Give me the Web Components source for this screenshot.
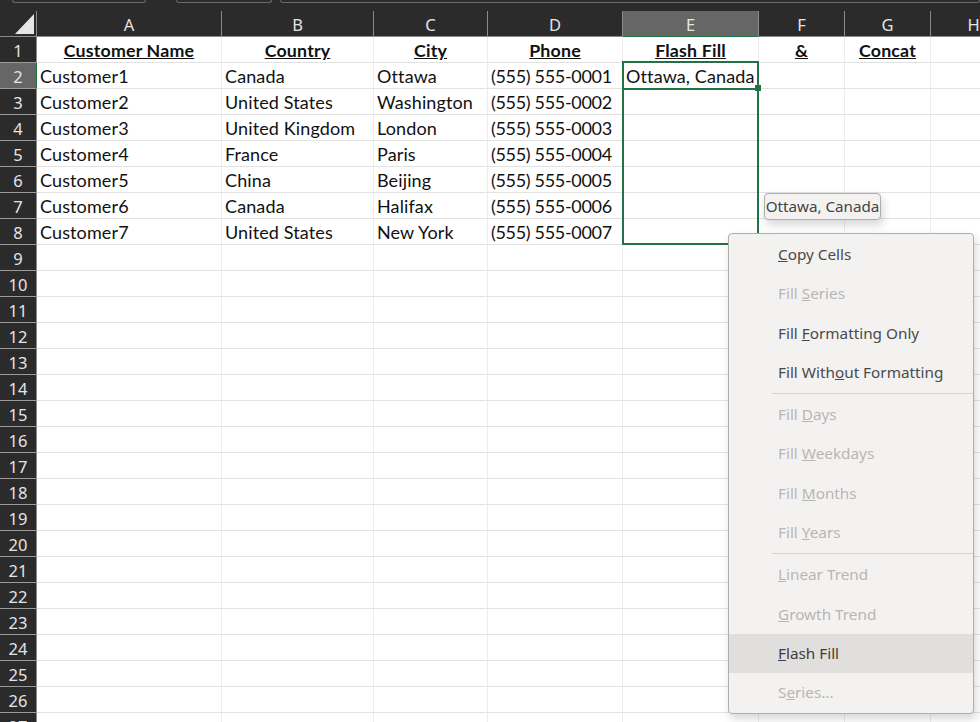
<!DOCTYPE html>
<html><head><meta charset="utf-8"><style>
html,body{margin:0;padding:0;width:980px;height:722px;overflow:hidden;background:#fff}
body{font-family:"Noto Sans","Open Sans",sans-serif}
</style></head><body>
<xl-app></xl-app>
<script>
const COLS=[['A',185],['B',152],['C',114],['D',135],['E',136],['F',86],['G',86],['H',86]];
const DATA=[
['Customer Name','Country','City','Phone','Flash Fill','&','Concat',''],
['Customer1','Canada','Ottawa','(555) 555-0001','Ottawa, Canada','','',''],
['Customer2','United States','Washington','(555) 555-0002','','','',''],
['Customer3','United Kingdom','London','(555) 555-0003','','','',''],
['Customer4','France','Paris','(555) 555-0004','','','',''],
['Customer5','China','Beijing','(555) 555-0005','','','',''],
['Customer6','Canada','Halifax','(555) 555-0006','','','',''],
['Customer7','United States','New York','(555) 555-0007','','','','']];
class XlTopbar extends HTMLElement{constructor(){super();this.attachShadow({mode:'open'}).innerHTML=`<style>
:host{display:flex;height:11px;background:#2b2b2b;gap:30px;padding-left:12px;box-sizing:border-box;overflow:hidden}
i{display:block;height:2px;border:1px solid #6a6a6a;border-top:0;border-radius:0 0 5px 5px;box-sizing:content-box}
</style><i style="width:132px"></i><i style="width:94px"></i><i style="width:700px;margin-left:-22px"></i>`}}
class XlSheet extends HTMLElement{constructor(){super();
const cols=COLS.map(c=>c[1]+'px').join(' ');
let h='<div class="c corner"><svg width="36" height="25" viewBox="0 0 36 25"><path d="M34 3V23H15Z" fill="#e6e6e6"/></svg></div>';
COLS.forEach(([n],i)=>h+=`<div class="c ch${n==='E'?' sel':''}">${n}</div>`);
for(let r=1;r<=27;r++){
 h+=`<div class="c rh${r===2?' sel':''}">${r}</div>`;
 COLS.forEach((_,i)=>{const t=r<=8?DATA[r-1][i]:'';h+=`<div class="c d${r===1?' th':(i===3?' ph':'')}">${t}</div>`});
}
this.attachShadow({mode:'open'}).innerHTML=`<style>
:host{display:grid;grid-template-columns:37px ${cols};grid-template-rows:26px repeat(27,26px);font:17px/25px "Lato",sans-serif;color:#111;position:relative;background:#fff;height:711px;overflow:hidden}
.c{box-sizing:border-box;white-space:nowrap;overflow:visible}
.corner{background:#2b2b2b;border-right:1px solid #8a8a8a;border-bottom:1px solid #8a8a8a;line-height:0}
.ch{background:#2b2b2b;color:#e4e4e4;text-align:center;border-right:1px solid #8a8a8a;border-bottom:1px solid #8a8a8a;font:16.5px/28px "Noto Sans",sans-serif}
.rh{background:#2b2b2b;color:#e4e4e4;text-align:center;border-bottom:1px solid #9a9a9a;font:16.5px/27px "Noto Sans",sans-serif;border-right:1px solid #8a8a8a}
.ch.sel{background:#666;border-bottom:1px solid #1f7244}
.rh.sel{background:#666;border-right:1px solid #1f7244}
.d{border-right:1px solid #ececec;border-bottom:1px solid #e2e2e2;padding-left:3px;font-size:18px;letter-spacing:.12px;line-height:26px}
.ph{letter-spacing:-.32px}
.th{font-weight:700;text-align:center;text-decoration:underline;padding-left:0;font-size:17.8px;letter-spacing:.18px;line-height:26px}
.range{position:absolute;left:622px;top:50px;width:137px;height:184px;box-sizing:border-box;border:2px solid #217346;pointer-events:none}
.active{position:absolute;left:622px;top:50px;width:137px;height:29px;box-sizing:border-box;border-bottom:2px solid #217346}
.handle{position:absolute;left:755px;top:74px;width:6px;height:6px;background:#217346}
</style>${h}<div class="range"></div><div class="active"></div><div class="handle"></div>`}}
class XlTip extends HTMLElement{constructor(){super();this.attachShadow({mode:'open'}).innerHTML=`<style>
:host{position:absolute;left:764px;top:193px;width:117px;height:27px;box-sizing:border-box;background:#f3f2f1;border:1.5px solid #b0aeac;border-radius:4px;font:15.2px/25px "Noto Sans",sans-serif;color:#444;text-align:center;white-space:nowrap;box-shadow:2px 5px 10px rgba(0,0,0,.16)}
</style><slot></slot>`}}
class XlMenu extends HTMLElement{constructor(){super();this.attachShadow({mode:'open'}).innerHTML=`<style>
:host{position:absolute;left:728px;top:233px;width:246px;height:481px;box-sizing:border-box;background:#f3f2f1;border:1.5px solid #b0aeac;border-radius:4px;display:flex;flex-direction:column;padding-top:1px;box-shadow:2px 5px 10px rgba(0,0,0,.16);font:15.3px/39.4px "Noto Sans",sans-serif}
</style><slot></slot>`}}
class XlItem extends HTMLElement{constructor(){super();this.attachShadow({mode:'open'}).innerHTML=`<style>
:host{display:block;height:39.4px;padding-left:49px;color:#4a4a4a;white-space:nowrap}
:host([disabled]){color:#b8b6b4}
:host([active]){background:#e1dfdd;color:#3c3c3c}
</style><slot></slot>`}}
class XlSep extends HTMLElement{constructor(){super();this.attachShadow({mode:'open'}).innerHTML=`<style>
:host{display:block;height:1px;margin:0 0 1.5px 42.5px;background:#d6d4d2}
</style>`}}
class XlApp extends HTMLElement{constructor(){super();this.attachShadow({mode:'open'}).innerHTML=`<style>
:host{display:block;position:relative;width:980px;height:722px;overflow:hidden}
</style>
<xl-topbar></xl-topbar><xl-sheet></xl-sheet>
<xl-tip>Ottawa, Canada</xl-tip>
<xl-menu>
<xl-item><u>C</u>opy Cells</xl-item>
<xl-item disabled>Fill <u>S</u>eries</xl-item>
<xl-item>Fill <u>F</u>ormatting Only</xl-item>
<xl-item>Fill With<u>o</u>ut Formatting</xl-item>
<xl-sep></xl-sep>
<xl-item disabled>Fill <u>D</u>ays</xl-item>
<xl-item disabled>Fill <u>W</u>eekdays</xl-item>
<xl-item disabled>Fill <u>M</u>onths</xl-item>
<xl-item disabled>Fill <u>Y</u>ears</xl-item>
<xl-sep></xl-sep>
<xl-item disabled><u>L</u>inear Trend</xl-item>
<xl-item disabled><u>G</u>rowth Trend</xl-item>
<xl-item active><u>F</u>lash Fill</xl-item>
<xl-item disabled>S<u>e</u>ries...</xl-item>
</xl-menu>`}}
customElements.define('xl-topbar',XlTopbar);
customElements.define('xl-sheet',XlSheet);
customElements.define('xl-tip',XlTip);
customElements.define('xl-menu',XlMenu);
customElements.define('xl-item',XlItem);
customElements.define('xl-sep',XlSep);
customElements.define('xl-app',XlApp);
</script></body></html>
